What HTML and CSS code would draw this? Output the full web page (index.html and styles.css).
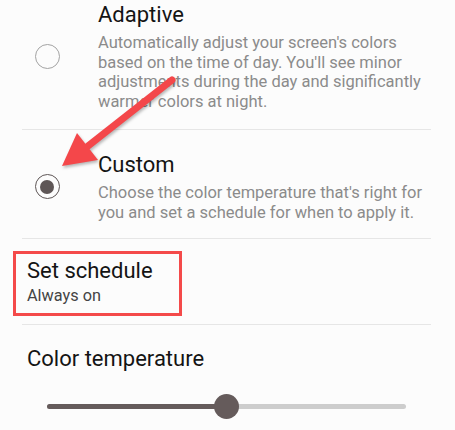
FILE: index.html
```html
<!DOCTYPE html>
<html>
<head>
<meta charset="utf-8">
<link rel="stylesheet" href="styles.css">
</head>
<body>
<div class="screen">
  <div class="list">
    <div class="item radio-item first">
      <span class="radio"></span>
      <div class="text">
        <div class="title">Adaptive</div>
        <div class="desc">Automatically adjust your screen's colors based on the time of day. You'll see minor adjustments during the day and significantly warmer colors at night.</div>
      </div>
    </div>
    <div class="item radio-item custom">
      <span class="radio checked"></span>
      <div class="text">
        <div class="title">Custom</div>
        <div class="desc">Choose the color temperature that's right for you and set a schedule for when to apply it.</div>
      </div>
    </div>
    <div class="item plain schedule">
      <div class="title">Set schedule</div>
      <div class="sub">Always on</div>
      <span class="highlight"></span>
    </div>
    <div class="item plain temp">
      <div class="title">Color temperature</div>
      <div class="slider">
        <div class="track"><div class="fill" style="width: 50.1%"></div></div>
        <span class="thumb" style="left: 50.1%"></span>
      </div>
    </div>
  </div>
  <svg class="arrow" width="455" height="430" viewBox="0 0 455 430">
    <line x1="172" y1="80" x2="88" y2="146" stroke="#f4474a" stroke-width="7" stroke-linecap="round"/>
    <polygon points="62,166 77,133 98,160" fill="#f4474a"/>
  </svg>
</div>
</body>
</html>
```
FILE: styles.css
```css
html, body {
  margin: 0;
  padding: 0;
  background: #fcfcfc;
}
.screen {
  position: relative;
  width: 455px;
  height: 430px;
  overflow: hidden;
  font-family: Roboto, "Noto Sans", sans-serif;
}
.list {
  margin: -20px 24px 0 22px;
}
.item {
  border-bottom: 1px solid #e6e6e6;
}
.radio-item {
  display: grid;
  grid-template-columns: 50px 1fr;
  column-gap: 26px;
  align-items: center;
  padding: 21px 0 18px;
}
.radio-item.custom {
  padding-bottom: 16px;
}
.radio {
  justify-self: center;
  width: 23px;
  height: 23px;
  border: 1.6px solid #a3a3a3;
  border-radius: 50%;
  box-sizing: content-box;
  position: relative;
}
.radio.checked {
  border-color: #5e5656;
}
.radio.checked::after {
  content: "";
  position: absolute;
  left: 50%;
  top: 50%;
  width: 14px;
  height: 14px;
  margin: -7px 0 0 -7px;
  border-radius: 50%;
  background: #5e5656;
}
.title {
  font-size: 22px;
  line-height: 28px;
  color: #141414;
}
.desc {
  margin-top: 4px;
  font-size: 16.5px;
  line-height: 19.5px;
  color: #8b8b8b;
}
.plain {
  padding-left: 5px;
}
.schedule {
  position: relative;
  padding-top: 18px;
  padding-bottom: 18px;
}
.sub {
  margin-top: 1px;
  font-size: 16.3px;
  line-height: 20px;
  color: #444;
}
.highlight {
  position: absolute;
  left: -9px;
  top: 12px;
  width: 163px;
  height: 59px;
  border: 3px solid #f44a4a;
}
.temp {
  border-bottom: none;
  padding-top: 20px;
}
.slider {
  position: relative;
  margin: 20px 0 0 20px;
  width: 359px;
  height: 26px;
  display: flex;
  align-items: center;
}
.track {
  width: 100%;
  height: 5px;
  border-radius: 3px;
  background: #cdcdcd;
  overflow: hidden;
}
.fill {
  height: 100%;
  background: #655b5b;
}
.thumb {
  position: absolute;
  top: 50%;
  width: 25px;
  height: 25px;
  margin: -12.5px 0 0 -12.5px;
  border-radius: 50%;
  background: #655b5b;
}
.arrow {
  position: absolute;
  left: 0;
  top: 0;
  pointer-events: none;
  filter: drop-shadow(1px 2px 1.5px rgba(0,0,0,0.28));
}
```
